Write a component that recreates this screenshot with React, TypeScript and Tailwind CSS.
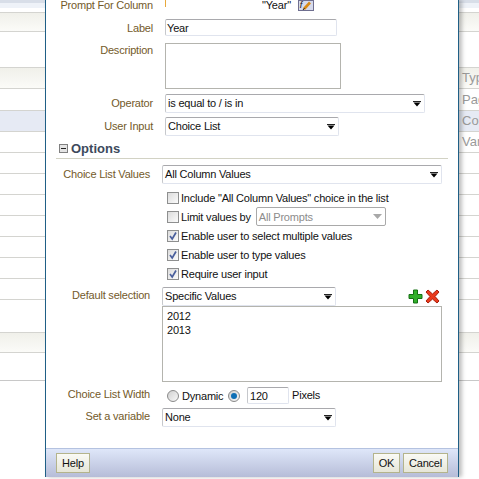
import React from "react";

const Arrow = () => (
  <svg width="8" height="6" viewBox="0 0 8 6" className="shrink-0">
    <path d="M0 0.5H8" stroke="#222" />
    <path d="M0.5 1.5H7.5L4 5.5Z" fill="#000" />
  </svg>
);

function Select({ className, text }: { className: string; text: string }) {
  return (
    <div className={`flex items-center justify-between rounded-[2px] border border-[#e0e4ee] border-t-[#a9a9ad] border-l-[#c6c8cc] bg-white pl-[2px] pr-[3px] text-[#111] ${className}`}>
      <span className="pb-[1px]">{text}</span>
      <Arrow />
    </div>
  );
}

function Check({ on, label, children }: { on?: boolean; label: string; children?: React.ReactNode }) {
  return (
    <div className="flex h-[19px] items-center pl-[5px]">
      <span className="flex h-[12px] w-[12px] shrink-0 items-center justify-center border border-[#8e8f8f] bg-gradient-to-br from-[#dcdcdc] to-[#fbfbfb]">
        {on && (
          <svg width="10" height="10" viewBox="0 0 10 10">
            <path d="M2 5L4.2 8L8 1.5" fill="none" stroke="#4a5f9c" strokeWidth="1.7" />
          </svg>
        )}
      </span>
      <span className="ml-[2px] text-[#111]">{label}</span>
      {children}
    </div>
  );
}

function Radio({ on }: { on?: boolean }) {
  return (
    <span className="flex h-[12px] w-[12px] shrink-0 items-center justify-center rounded-full border border-[#8a8a8a] bg-gradient-to-br from-[#d0d0d0] to-[#f8f8f8]">
      {on && <span className="h-[6px] w-[6px] rounded-full bg-[#0f6fb5]" />}
    </span>
  );
}

function Background() {
  const line = "border-b border-[#d4d4d0]";
  const hdr = "bg-gradient-to-b from-[#f0f0ea] to-[#fbfbf8]";
  const txt = "flex items-center pl-[462px] text-[13px] tracking-normal text-[#9a9a9a] whitespace-nowrap";
  return (
    <div className="flex h-[479px] w-[479px] flex-col overflow-hidden bg-white">
      <div className="h-[3px] shrink-0 bg-[#d8dee8]" />
      <div className="h-[5px] shrink-0 bg-[#eef2f8]" />
      <div className={`h-[5px] shrink-0 ${line}`} />
      <div className={`h-[19px] shrink-0 ${hdr} ${line}`} />
      <div className={`h-[36px] shrink-0 ${line}`} />
      <div className={`h-[21px] shrink-0 ${hdr} ${line} ${txt}`}>Typ</div>
      <div className={`h-[22px] shrink-0 ${line} ${txt}`}>Pag</div>
      <div className={`h-[21px] shrink-0 bg-[#e6eaf4] ${line} ${txt}`}>Col</div>
      <div className={`h-[21px] shrink-0 ${line} ${txt}`}>Var</div>
      {[0, 1, 2, 3, 4, 5, 6].map((i) => (
        <div key={i} className={`h-[21px] shrink-0 ${line}`} />
      ))}
      <div className={`h-[33px] shrink-0 ${line}`} />
      <div className={`h-[20px] shrink-0 ${hdr} ${line}`} />
      <div className={`h-[28px] shrink-0 border-b border-[#c8c8c8]`} />
    </div>
  );
}

export default function App() {
  const label = "text-right text-[#735a2a]";
  return (
    <div className="relative h-[479px] w-[479px] overflow-hidden font-['Liberation_Sans',sans-serif] text-[11px] leading-[14px] tracking-[-0.2px]">
      <Background />
      <div className="absolute left-[45px] top-0 flex h-[477px] w-[414px] flex-col overflow-hidden border-x border-x-[#1f5f86] bg-white shadow-[3px_0_4px_rgba(0,0,0,0.25)]">
        <div className="flex-1">
          {/* top section */}
          <div className="grid grid-cols-[107px_1fr] gap-x-[12px]">
            <div className={`${label} -mt-[2px] h-[21px] whitespace-nowrap`}>Prompt For Column</div>
            <div className="-mt-[2px] flex h-[21px] items-start">
              <span className="mt-[2px] h-[7px] w-[1px] bg-[#e8a93c]" />
              <span className="ml-[96px] text-[#111]">"Year"</span>
              <span className="ml-[7px] mt-[2px] flex h-[11px] w-[16px] items-center border border-[#6f6f90] bg-[#d6daec] pl-[1px] text-[9px] italic leading-[9px] text-[#111]">
                f
                <svg width="10" height="9" viewBox="0 0 10 9">
                  <path d="M2 8L8 1.5" stroke="#d98a14" strokeWidth="2.6" />
                  <path d="M1 9l1.5-2" stroke="#222" strokeWidth="1" />
                </svg>
              </span>
            </div>

            <div className={`${label} flex h-[17px] items-center justify-end`}>Label</div>
            <div className="flex h-[17px] w-[172px] items-center rounded-[2px] border border-[#e0e4ee] border-t-[#a9a9ad] border-l-[#c6c8cc] pl-[1px] text-[#111]">Year</div>

            <div className={`${label} mt-[7px]`}>Description</div>
            <div className="mt-[7px] h-[46px] w-[176px] border border-[#b4b4ae] bg-white" />

            <div className={`${label} mt-[5px] flex h-[19px] items-center justify-end pb-[2px]`}>Operator</div>
            <Select className="mt-[5px] h-[19px] w-[260px]" text="is equal to / is in" />

            <div className={`${label} mt-[4px] flex h-[19px] items-center justify-end pb-[2px]`}>User Input</div>
            <Select className="mt-[4px] h-[19px] w-[174px]" text="Choice List" />
          </div>

          {/* options header */}
          <div className="ml-[10px] mr-[10px] mt-[5px] flex h-[18px] items-center border-b border-[#d2d2c4] pb-[2px]">
            <span className="ml-[3px] flex h-[9px] w-[9px] items-center justify-center border border-[#808080] bg-[#e4e4e4]">
              <span className="h-[1px] w-[5px] bg-[#222]" />
            </span>
            <span className="ml-[3px] text-[13px] font-bold tracking-normal text-[#3d4a5c]">Options</span>
          </div>

          {/* options body */}
          <div className="mt-[6px] grid grid-cols-[104px_1fr] gap-x-[12px]">
            <div className={`${label} flex h-[19px] items-center justify-end pb-[2px]`}>Choice List Values</div>
            <Select className="h-[19px] w-[280px]" text="All Column Values" />

            <div className="col-start-2 mt-[4px]">
              <Check label={'Include "All Column Values" choice in the list'} />
              <Check label="Limit values by">
                <div className="ml-[5px] flex h-[19px] w-[130px] items-center justify-between rounded-[2px] border border-[#a9a9a9] bg-white pl-[2px] pr-[3px] text-[#8c8c8c]">
                  <span>All Prompts</span>
                  <svg width="9" height="5" viewBox="0 0 9 5"><path d="M0 0H9L4.5 5Z" fill="#a8a8a8" /></svg>
                </div>
              </Check>
              <Check on label="Enable user to select multiple values" />
              <Check on label="Enable user to type values" />
              <Check on label="Require user input" />
            </div>

            <div className={`${label} mt-[4px] flex h-[19px] items-center justify-end pb-[3px]`}>Default selection</div>
            <div className="mt-[4px] flex h-[19px] w-[280px] items-center">
              <Select className="h-[19px] w-[174px]" text="Specific Values" />
              <svg className="ml-[72px]" width="15" height="15" viewBox="0 0 15 15">
                <path d="M5.5 1H9.5V5.5H14V9.5H9.5V14H5.5V9.5H1V5.5H5.5Z" fill="#33b02a" stroke="#146f12" strokeWidth="1" />
              </svg>
              <svg className="ml-[2px]" width="15" height="15" viewBox="0 0 15 15">
                <path d="M3 1L7.5 5L12 1L14 3L10 7.5L14 12L12 14L7.5 10L3 14L1 12L5 7.5L1 3Z" fill="#ea3a1c" stroke="#a8200c" strokeWidth="1" />
              </svg>
            </div>

            <div className="col-start-2 h-[76px] w-[280px] border border-[#b4b4ae] bg-white pl-[4px] pt-[2px] text-[#111]">
              <div>2012</div>
              <div>2013</div>
            </div>

            <div className={`${label} mt-[5px] flex h-[17px] items-center justify-end pb-[3px]`}>Choice List Width</div>
            <div className="mt-[5px] flex h-[17px] items-center pl-[5px] text-[#111]">
              <Radio />
              <span className="ml-[3px] w-[46px]">Dynamic</span>
              <Radio on />
              <div className="ml-[7px] flex h-[17px] w-[42px] items-center rounded-[2px] border border-[#e0e4ee] border-t-[#a9a9ad] border-l-[#c6c8cc] pl-[2px]">120</div>
              <span className="ml-[3px] pb-[2px]">Pixels</span>
            </div>

            <div className={`${label} mt-[4px] flex h-[19px] items-center justify-end pb-[3px]`}>Set a variable</div>
            <Select className="mt-[4px] h-[19px] w-[174px]" text="None" />
          </div>
        </div>

        {/* footer */}
        <div className="flex h-[29px] shrink-0 items-start justify-between border-t border-[#b4c2e0] bg-gradient-to-b from-[#dfe7f9] to-[#b6bdd8] pl-[10px] pr-[10px] pt-[4px] text-[#111]">
          <button className="h-[20px] w-[34px] border border-[#b4b48c] bg-gradient-to-b from-[#fafaf5] to-[#e6e6d8]">Help</button>
          <div className="flex gap-[3px]">
            <button className="h-[20px] w-[27px] border border-[#b4b48c] bg-gradient-to-b from-[#fafaf5] to-[#e6e6d8]">OK</button>
            <button className="h-[20px] w-[45px] border border-[#b4b48c] bg-gradient-to-b from-[#fafaf5] to-[#e6e6d8]">Cancel</button>
          </div>
        </div>
      </div>
    </div>
  );
}
